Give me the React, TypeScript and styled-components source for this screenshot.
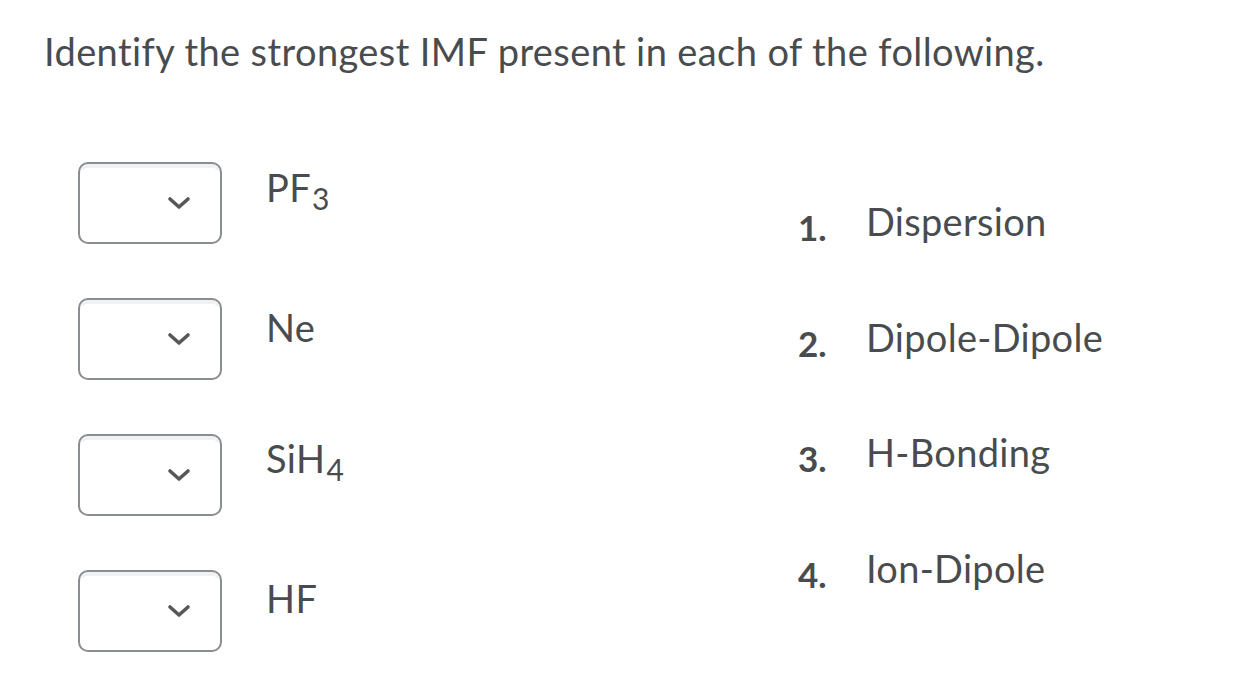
import React from "react";
import styled, { createGlobalStyle } from "styled-components";

const Global = createGlobalStyle`
  html, body { margin: 0; padding: 0; background: #ffffff; }
  body { font-family: Lato, "Noto Sans", sans-serif; color: #494c4e; }
`;

const Page = styled.div`
  width: 1245px;
  height: 695px;
  box-sizing: border-box;
  padding: 28px 0 0 44px;
  overflow: hidden;
`;

const Heading = styled.div`
  font-size: 38px;
  line-height: 46px;
  font-weight: 400;
  letter-spacing: 0.4px;
`;

const Body = styled.div`
  display: flex;
  margin-top: 88px;
`;

const LeftCol = styled.div`
  width: 754px;
  box-sizing: border-box;
  padding-left: 34px;
  display: flex;
  flex-direction: column;
  gap: 54px;
`;

const Row = styled.div`
  display: flex;
  align-items: flex-start;
  gap: 44px;
`;

const SelectBox = styled.div`
  width: 144px;
  height: 82px;
  box-sizing: border-box;
  border: 2px solid #8b8e91;
  border-radius: 10px;
  background: #ffffff;
  box-shadow: inset 0 4px 0 #eff1f3;
  display: flex;
  align-items: center;
  justify-content: flex-end;
  padding-right: 29px;
`;

const Label = styled.div<{ $offset: number }>`
  font-size: 38px;
  line-height: 46px;
  letter-spacing: 0.4px;
  padding-top: ${(p) => p.$offset}px;
`;

const Sub = styled.sub`
  font-size: 30px;
  line-height: 0;
  vertical-align: -8px;
  margin-left: 1px;
`;

const List = styled.ol`
  list-style: none;
  margin: 36px 0 0 0;
  padding: 0;
  display: flex;
  flex-direction: column;
  gap: 68.6px;
`;

const Item = styled.li`
  display: flex;
  align-items: baseline;
  font-size: 38px;
  line-height: 46px;
  letter-spacing: 0.3px;
`;

const Num = styled.span`
  width: 68px;
  font-weight: 700;
  font-size: 35px;
  letter-spacing: 0;
  position: relative;
  top: 5px;
`;

const Chevron = () => (
  <svg width="24" height="14" viewBox="0 0 24 14" aria-hidden="true">
    <path
      d="M3 3 L12 11 L21 3"
      fill="none"
      stroke="#55585b"
      strokeWidth="3.6"
      strokeLinecap="round"
      strokeLinejoin="round"
    />
  </svg>
);

const rows: { name: string; sub?: string; offset: number }[] = [
  { name: "PF", sub: "3", offset: 2 },
  { name: "Ne", offset: 6 },
  { name: "SiH", sub: "4", offset: 1 },
  { name: "HF", offset: 5 },
];

const options = ["Dispersion", "Dipole-Dipole", "H-Bonding", "Ion-Dipole"];

export default function App() {
  return (
    <>
      <Global />
      <Page>
        <Heading>Identify the strongest IMF present in each of the following.</Heading>
        <Body>
          <LeftCol>
            {rows.map((r) => (
              <Row key={r.name}>
                <SelectBox>
                  <Chevron />
                </SelectBox>
                <Label $offset={r.offset}>
                  {r.name}
                  {r.sub && <Sub>{r.sub}</Sub>}
                </Label>
              </Row>
            ))}
          </LeftCol>
          <List>
            {options.map((o, i) => (
              <Item key={o}>
                <Num>{i + 1}.</Num>
                <span>{o}</span>
              </Item>
            ))}
          </List>
        </Body>
      </Page>
    </>
  );
}
